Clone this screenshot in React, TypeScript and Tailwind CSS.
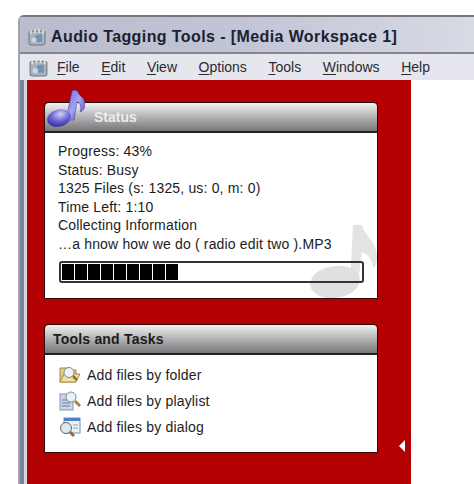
import { ReactElement } from "react";

const menuItems: [string, string][] = [
  ["F", "ile"],
  ["E", "dit"],
  ["V", "iew"],
  ["O", "ptions"],
  ["T", "ools"],
  ["W", "indows"],
  ["H", "elp"],
];

const WindowIcon = ({ size }: { size: number }): ReactElement => (
  <svg width={size} height={size} viewBox="0 0 20 20" className="shrink-0">
    <rect x="2" y="4" width="16" height="14" rx="2" fill="#a9b3bc" stroke="#6f7780" />
    <path d="M4 3 L4 7 M8 2 L8 6 M12 2 L12 6 M16 3 L16 7" stroke="#e8e8e8" strokeWidth="1.5" />
    <path d="M5 15 L9 8 L15 7 L15 15 Z" fill="#6f94bb" />
    <circle cx="7" cy="13" r="2.5" fill="#cfd6dc" />
  </svg>
);

const BigNote = (): ReactElement => (
  <svg width="38" height="38" viewBox="0 0 38 38" className="absolute top-[-13px] left-[2px]">
    <defs>
      <radialGradient id="noteHead" cx="0.6" cy="0.3" r="0.75">
        <stop offset="0" stopColor="#d5d3f7" />
        <stop offset="0.5" stopColor="#7069d8" />
        <stop offset="1" stopColor="#2f2a96" />
      </radialGradient>
      <linearGradient id="noteStem" x1="0" y1="0" x2="1" y2="1">
        <stop offset="0" stopColor="#6f68d8" />
        <stop offset="0.5" stopColor="#a7a3ee" />
        <stop offset="1" stopColor="#4a43b8" />
      </linearGradient>
    </defs>
    <path
      d="M25 1 C26 -0.5 30 0 31 2 C32 6 38 8 38 14 C38 18 36 21 33 22 C35 17 33 13 30 12 L27 30 L19 30 Z"
      fill="url(#noteStem)"
      stroke="#3b34a8"
      strokeWidth="0.5"
    />
    <ellipse cx="12" cy="28" rx="12" ry="8.5" fill="url(#noteHead)" transform="rotate(-14 12 28)" />
  </svg>
);

const GhostNote = (): ReactElement => (
  <svg width="67" height="73" viewBox="0 0 67 73" className="absolute right-0 bottom-0">
    <path d="M43 0 L52 0 C54 10 67 16 67 33 C67 38 65 42 63 44 C63 36 59 30 52 27 L48 58 L40 58 Z" fill="#e3e3e5" />
    <ellipse cx="25" cy="57" rx="25" ry="16" fill="#e0e0e3" transform="rotate(-8 25 57)" />
  </svg>
);

const FolderIcon = (): ReactElement => (
  <svg width="22" height="18" viewBox="0 0 22 18">
    <path d="M1 2 L8 2 L9 4 L17 4 L17 16 L1 16 Z" fill="#e2cf85" stroke="#a08c4a" />
    <path d="M1 16 L5 8 L21 8 L17 16 Z" fill="#f0e0a0" stroke="#a08c4a" />
    <circle cx="10" cy="6.5" r="5" fill="#eef2f6" stroke="#7f8a94" />
    <path d="M14 10 L18 14" stroke="#8a6d3a" strokeWidth="2.5" />
  </svg>
);

const PlaylistIcon = (): ReactElement => (
  <svg width="22" height="20" viewBox="0 0 22 20">
    <rect x="1" y="3" width="13" height="16" fill="#c9d6e6" stroke="#8497b0" />
    <path d="M3 9 H8 M3 12 H11 M3 15 H11" stroke="#5f7ba3" />
    <circle cx="12" cy="6" r="5" fill="#eef2f6" stroke="#7f8a94" />
    <path d="M16 10 L21 15" stroke="#a5824a" strokeWidth="3" />
  </svg>
);

const DialogIcon = (): ReactElement => (
  <svg width="22" height="20" viewBox="0 0 22 20">
    <rect x="5" y="1" width="16" height="15" fill="#eef2f8" stroke="#6f8fc0" />
    <rect x="5" y="1" width="16" height="3" fill="#4f80c8" />
    <path d="M14 8 H19 M14 11 H19" stroke="#8aa4cc" />
    <circle cx="7" cy="11" r="5.5" fill="#dfe8ee" stroke="#5f6b75" />
    <path d="M11 15 L15 19" stroke="#8a6d3a" strokeWidth="3" />
  </svg>
);

const tasks: [() => ReactElement, string][] = [
  [FolderIcon, "Add files by folder"],
  [PlaylistIcon, "Add files by playlist"],
  [DialogIcon, "Add files by dialog"],
];

export default function App(): ReactElement {
  return (
    <div className="h-[484px] w-[474px] overflow-hidden bg-white pt-[15px] pl-[18px] font-['Liberation_Sans',sans-serif]">
      <div className="flex h-[469px] w-[456px] flex-col rounded-tl-[6px] border-t-2 border-l-2 border-t-[#77777c] border-l-[#a4a4ac]">
        <div className="flex h-[35px] items-center gap-[4px] bg-gradient-to-r from-[#b9bccd] via-[#c2c5d6] to-[#d8dae4] pt-[4px] pl-[7px]">
          <WindowIcon size={20} />
          <span className="text-[16px] font-bold tracking-[0.4px] text-[#1a2230]">
            Audio Tagging Tools - [Media Workspace 1]
          </span>
        </div>
        <div className="h-[2px] bg-[#85858c]" />
        <div className="flex h-[26px] items-center bg-[#e6e7ee] pl-[8px] text-[14px] text-[#2a2a30]">
          <WindowIcon size={21} />
          <div className="ml-[8px] flex gap-[21.6px]">
            {menuItems.map(([first, rest]) => (
              <span key={first}>
                <span className="underline underline-offset-2">{first}</span>
                {rest}
              </span>
            ))}
          </div>
        </div>
        <div className="flex flex-1">
          <div className="flex w-[7px]">
            <div className="w-[4px] bg-[#7d8599]" />
            <div className="w-[3px] bg-[#d5d7e2]" />
          </div>
          <div className="relative h-full w-[384px] bg-[#b30000] px-[17px] pt-[22px]">
            <section className="w-[334px] rounded-t-[4px] border border-[#2a0a0a]">
              <div className="relative flex h-[28px] items-center rounded-t-[4px] bg-gradient-to-b from-[#f2f2f2] to-[#77777a] pl-[49px] text-[14px] font-bold text-[#ececec]">
                <BigNote />
                Status
              </div>
              <div className="relative h-[167px] border-t-2 border-[#222] bg-white pt-[9px] pl-[13px] text-[14px] leading-[18.6px] tracking-[0.17px] text-[#1c1c1c]">
                <GhostNote />
                <p className="relative">Progress: 43%</p>
                <p className="relative">Status: Busy</p>
                <p className="relative">1325 Files (s: 1325, us: 0, m: 0)</p>
                <p className="relative">Time Left: 1:10</p>
                <p className="relative">Collecting Information</p>
                <p className="relative">…a hnow how we do ( radio edit two ).MP3</p>
                <div className="relative mt-[7px] ml-[1px] flex h-[22px] w-[305px] gap-[1px] rounded-[3px] border-2 border-[#333] p-[1px]">
                  {Array.from({ length: 9 }).map((_, i) => (
                    <div key={i} className="h-full w-[12px] bg-black" />
                  ))}
                </div>
              </div>
            </section>
            <section className="mt-[25px] w-[334px] rounded-t-[4px] border border-[#2a0a0a]">
              <div className="flex h-[28px] items-center rounded-t-[4px] bg-gradient-to-b from-[#f2f2f2] to-[#77777a] pl-[8px] text-[14px] font-bold tracking-[0.2px] text-[#1c1c1c]">
                Tools and Tasks
              </div>
              <div className="flex h-[99px] flex-col gap-[6px] border-t-2 border-[#222] bg-white pt-[10px] pl-[14px] text-[14px] tracking-[0.17px] text-[#1c1c1c]">
                {tasks.map(([Icon, label]) => (
                  <div key={label} className="flex h-[20px] items-center gap-[6px]">
                    <Icon />
                    <span>{label}</span>
                  </div>
                ))}
              </div>
            </section>
            <div className="absolute top-[360px] right-[6px] h-0 w-0 border-y-[6px] border-r-[6px] border-y-transparent border-r-white" />
          </div>
        </div>
      </div>
    </div>
  );
}
